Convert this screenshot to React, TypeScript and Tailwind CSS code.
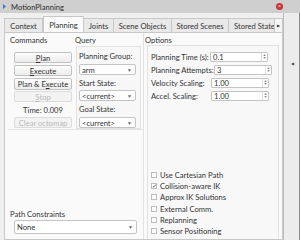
import React from "react";

const font = { fontFamily: "Lato, 'Open Sans', sans-serif" };

function Btn({ children, disabled }: { children: React.ReactNode; disabled?: boolean }) {
  return (
    <div
      className={
        disabled
          ? "h-[11px] w-[58px] flex items-center justify-center rounded-[2px] border border-[#dcdcdc] bg-[#f3f3f3] text-[#b8b8b8]"
          : "h-[11px] w-[58px] flex items-center justify-center rounded-[2px] border border-[#c2c2c2] bg-gradient-to-b from-[#fdfdfd] to-[#ececec] text-[#333]"
      }
    >
      {children}
    </div>
  );
}

function Combo({ text, w, h }: { text: string; w: string; h: string }) {
  return (
    <div className={`${w} ${h} flex items-center justify-between rounded-[2px] border border-[#c4c4c4] bg-white pl-[2px] pr-[3px] text-[#333]`}>
      <span>{text}</span>
      <span className="text-[5px] text-[#666]">▼</span>
    </div>
  );
}

function Spin({ value, ml }: { value: string; ml: string }) {
  return (
    <div className={`${ml} h-[10px] w-[58px] flex items-center justify-between rounded-[1px] border border-[#c4c4c4] bg-white pl-[2px] text-[#333]`}>
      <span>{value}</span>
      <div className="flex h-full w-[6px] flex-col items-center justify-center border-l border-[#e0e0e0] text-[#777] leading-[3px]">
        <span className="text-[3.5px]">▲</span>
        <span className="text-[3.5px]">▼</span>
      </div>
    </div>
  );
}

function Check({ label, checked }: { label: string; checked?: boolean }) {
  return (
    <div className="flex h-[11.33px] items-center">
      <div className="flex h-[6px] w-[6px] items-center justify-center border border-[#bdbdbd] bg-white text-[6px] leading-none text-[#333]">
        {checked ? "✓" : ""}
      </div>
      <span className="ml-[3px] text-[#333]">{label}</span>
    </div>
  );
}

export default function App() {
  return (
    <div className="relative h-[240px] w-[300px] overflow-hidden bg-[#efefef] text-[7.6px] leading-[10px] text-[#333]" style={font}>
      {/* title bar */}
      <div className="flex h-[13px] items-center bg-[#cfcfcf]">
        <div className="ml-[3px] h-[5px] w-[3px] bg-[#3a7bd5]" style={{ clipPath: "polygon(0 0,100% 50%,0 100%)" }} />
        <span className="ml-[5px] text-[#2e2e2e]">MotionPlanning</span>
        <div className="ml-auto mr-[17px] flex h-[7px] w-[7px] items-center justify-center rounded-full bg-[#c9343a] text-[5px] leading-none text-white">
          ×
        </div>
      </div>

      <div className="flex h-[227px]">
        {/* main */}
        <div className="flex w-[283px] flex-col pl-[4px] pt-[3px]">
          {/* tabs */}
          <div className="flex h-[16px] items-end">
            <div className="flex h-[14px] w-[39px] items-center justify-center border border-b-0 border-[#c8c8c8] bg-[#e9e9e9]">Context</div>
            <div className="flex h-[16px] w-[41px] items-center justify-center border border-b-0 border-[#c8c8c8] bg-[#fafafa]">Planning</div>
            <div className="flex h-[14px] w-[30px] items-center justify-center border border-b-0 border-l-0 border-[#c8c8c8] bg-[#e9e9e9]">Joints</div>
            <div className="flex h-[14px] w-[58px] items-center justify-center border border-b-0 border-l-0 border-[#c8c8c8] bg-[#e9e9e9]">Scene Objects</div>
            <div className="flex h-[14px] w-[57px] items-center justify-center border border-b-0 border-l-0 border-[#c8c8c8] bg-[#e9e9e9]">Stored Scenes</div>
            <div className="flex h-[14px] w-[45px] items-center overflow-hidden whitespace-nowrap border border-b-0 border-l-0 border-r-0 border-[#c8c8c8] bg-[#e9e9e9] pl-[5px]">Stored States</div>
            <div className="flex h-[14px] w-[9px] items-center justify-center border border-b-0 border-[#c8c8c8] bg-[#f5f5f5] text-[4px]">▶</div>
          </div>

          {/* pane */}
          <div className="flex flex-1 border border-[#c8c8c8] bg-[#fafafa]">
            {/* left column */}
            <div className="flex w-[139px] flex-col border-r border-[#e2e2e2] pl-[3px]">
              <div className="flex h-[97px] border-b border-[#e4e4e4] pt-[2px]">
                {/* commands */}
                <div className="flex w-[67px] flex-col pl-[2px]">
                  <div className="h-[10px]">Commands</div>
                  <div className="ml-[4px] mt-[7px] flex flex-col">
                    <Btn>
                      <span className="underline">P</span>lan
                    </Btn>
                    <div className="mt-[2px]">
                      <Btn>
                        <span className="underline">E</span>xecute
                      </Btn>
                    </div>
                    <div className="mt-[2px]">
                      <div className="flex h-[12px] w-[58px] items-center justify-center rounded-[2px] border border-[#c2c2c2] bg-gradient-to-b from-[#fdfdfd] to-[#ececec]">
                        Plan &amp; E<span className="underline">x</span>ecute
                      </div>
                    </div>
                    <div className="mt-[1px]">
                      <Btn disabled>
                        <span className="underline">S</span>top
                      </Btn>
                    </div>
                    <div className="flex h-[15px] w-[58px] items-center justify-center">Time: 0.009</div>
                    <Btn disabled>Clear octomap</Btn>
                  </div>
                </div>
                {/* query */}
                <div className="flex w-[66px] flex-col">
                  <div className="h-[10px]">Query</div>
                  <div className="ml-[1px] mt-[1px] flex h-[85px] w-[65px] flex-col border border-[#e2e2e2] bg-[#f7f7f7] pl-[2px] pt-[4px]">
                    <div className="h-[10px]">Planning Group:</div>
                    <div className="mt-[3px]">
                      <Combo text="arm" w="w-[57px]" h="h-[11px]" />
                    </div>
                    <div className="mt-[3px] h-[10px]">Start State:</div>
                    <div className="mt-[2px]">
                      <Combo text="<current>" w="w-[57px]" h="h-[11px]" />
                    </div>
                    <div className="mt-[3px] h-[10px]">Goal State:</div>
                    <div className="mt-[3px]">
                      <Combo text="<current>" w="w-[57px]" h="h-[11px]" />
                    </div>
                  </div>
                </div>
              </div>
              <div className="ml-[2px] mt-[79px] h-[10px]">Path Constraints</div>
              <div className="ml-[6px] mt-[1px]">
                <Combo text="None" w="w-[123px]" h="h-[14px]" />
              </div>
            </div>

            {/* options */}
            <div className="flex flex-1 flex-col pt-[2px]">
              <div className="ml-[1px] h-[10px]">Options</div>
              <div className="ml-[3px] mr-[3px] flex flex-1 flex-col border border-b-0 border-[#e2e2e2] bg-[#f8f8f8] pl-[3px] pt-[6px]">
                <div className="flex h-[10px] items-center">
                  <span className="w-[59px] whitespace-nowrap">Planning Time (s):</span>
                  <Spin value="0.1" ml="ml-[0px]" />
                </div>
                <div className="mt-[3px] flex h-[10px] items-center">
                  <span className="w-[63px] whitespace-nowrap">Planning Attempts:</span>
                  <Spin value="3" ml="ml-[0px]" />
                </div>
                <div className="mt-[3px] flex h-[10px] items-center">
                  <span className="w-[60px] whitespace-nowrap">Velocity Scaling:</span>
                  <Spin value="1.00" ml="ml-[0px]" />
                </div>
                <div className="mt-[3px] flex h-[10px] items-center">
                  <span className="w-[60px] whitespace-nowrap">Accel. Scaling:</span>
                  <Spin value="1.00" ml="ml-[0px]" />
                </div>
                <div className="mt-[68px] flex flex-col">
                  <Check label="Use Cartesian Path" />
                  <Check label="Collision-aware IK" checked />
                  <Check label="Approx IK Solutions" />
                  <Check label="External Comm." />
                  <Check label="Replanning" />
                  <Check label="Sensor Positioning" />
                </div>
              </div>
            </div>
          </div>
        </div>

        {/* right strip */}
        <div className="flex flex-1 border-l border-r border-[#bdbdbd] border-r-[#8a8a8a] bg-[#ececec] pt-[46px] pl-[7px]">
          <span className="text-[4px] text-[#444]">◀</span>
        </div>
      </div>
    </div>
  );
}
